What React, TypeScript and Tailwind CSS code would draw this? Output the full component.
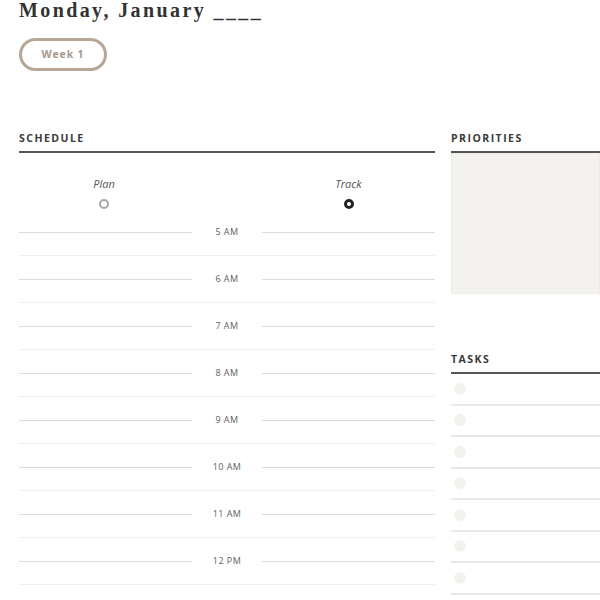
const hours = ["5 AM", "6 AM", "7 AM", "8 AM", "9 AM", "10 AM", "11 AM", "12 PM"];
const tasks = [0, 1, 2, 3, 4, 5, 6];

function SectionLabel({ children }: { children: string }) {
  return (
    <div className="flex flex-col">
      <h2 className="text-[10.5px] leading-[12px] font-bold tracking-[0.14em] text-[#3a3a3a] font-['Open_Sans',sans-serif]">
        {children}
      </h2>
      <div className="mt-[7px] h-[2px] bg-[#555555]" />
    </div>
  );
}

export default function App() {
  return (
    <div className="w-[600px] h-[600px] overflow-hidden bg-white pl-[19px]">
      {/* Header */}
      <h1 className="text-[20px] leading-[20px] font-bold tracking-[0.12em] text-[#333333] font-['Liberation_Serif',serif]">
        Monday, January ____
      </h1>
      <div className="mt-[18px] w-[88px] h-[33px] rounded-full border-[3px] border-[#b6a797] flex items-center justify-center">
        <span className="text-[10.5px] font-bold tracking-[0.08em] text-[#a7998b] font-['Open_Sans',sans-serif]">
          Week 1
        </span>
      </div>

      <div className="mt-[61px] flex gap-[16px]">
        {/* Schedule */}
        <div className="w-[416px] shrink-0">
          <SectionLabel>SCHEDULE</SectionLabel>
          <div className="grid grid-cols-[173px_70px_173px] mt-[24px]">
            <div className="flex flex-col items-center pr-[3px]">
              <span className="text-[11px] leading-[14px] italic text-[#555555] font-['Open_Sans',sans-serif]">Plan</span>
              <span className="mt-[8px] w-[10px] h-[10px] rounded-full border-[2.5px] border-[#a9a9a9]" />
            </div>
            <div />
            <div className="flex flex-col items-center">
              <span className="text-[11px] leading-[14px] italic text-[#555555] font-['Open_Sans',sans-serif]">Track</span>
              <span className="mt-[8px] w-[10px] h-[10px] rounded-full border-[3px] border-[#222222]" />
            </div>
          </div>
          <div className="flex flex-col">
            {hours.map((h) => (
              <div key={h} className="h-[47px] border-b border-[#f0f0f0] grid grid-cols-[173px_70px_173px] items-center">
                <div className="h-px bg-[#dcdcdc]" />
                <span className="text-center text-[9px] tracking-[0.05em] text-[#5e5e5e] font-['Open_Sans',sans-serif]">{h}</span>
                <div className="h-px bg-[#dcdcdc]" />
              </div>
            ))}
          </div>
        </div>

        {/* Right column */}
        <div className="flex-1 min-w-0">
          <SectionLabel>PRIORITIES</SectionLabel>
          <div className="h-[141px] bg-[#f4f2ef] border border-[#eeebe6]" />
          <div className="mt-[59px]">
            <SectionLabel>TASKS</SectionLabel>
            <div className="flex flex-col">
              {tasks.map((t) => (
                <div key={t} className="h-[31.5px] border-b-2 border-[#e8e8e8] flex items-center pl-[3px]">
                  <span className="w-[12px] h-[12px] rounded-full bg-[#f3f2ee]" />
                </div>
              ))}
            </div>
          </div>
        </div>
      </div>
    </div>
  );
}
